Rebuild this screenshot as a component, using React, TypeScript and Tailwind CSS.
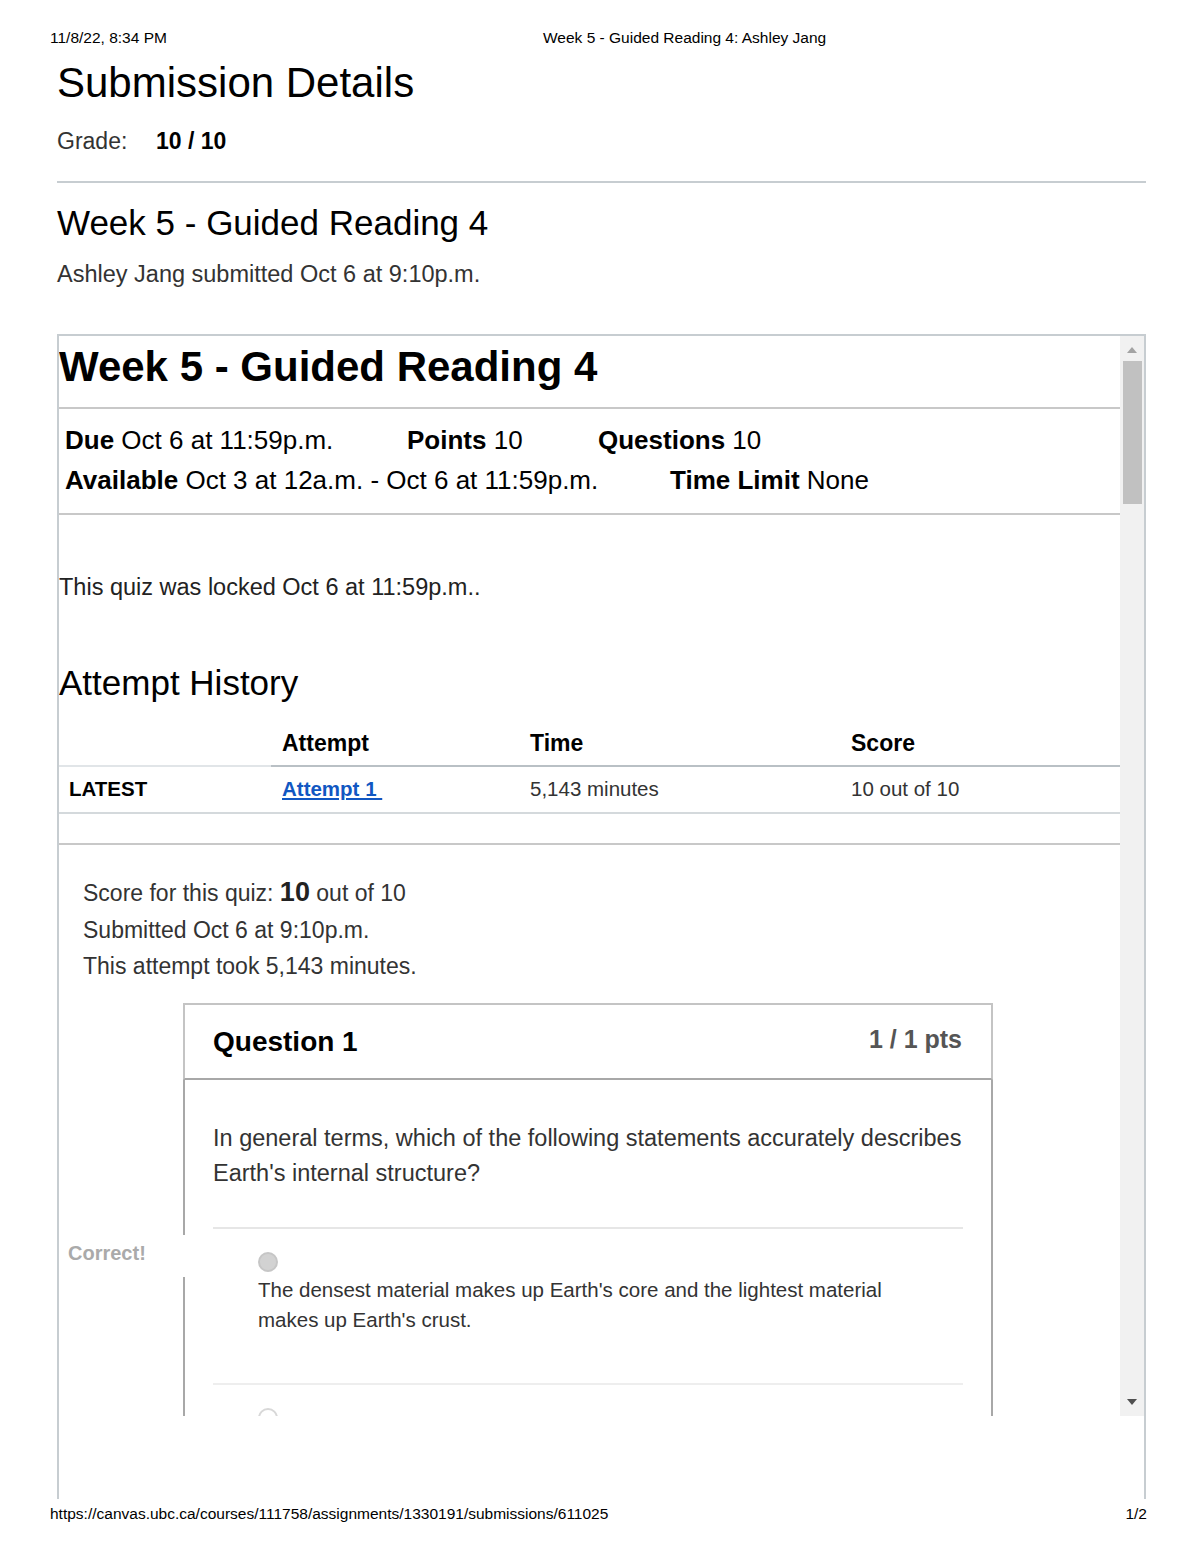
export default function App() {
  return (
    <div className="relative w-[1200px] h-[1553px] bg-white font-['Liberation_Sans',Arial,sans-serif] text-[#333]">
      {/* print header */}
      <div className="flex pt-[29px] pl-[50px] text-[15.5px] leading-[18px] text-black">
        <span className="w-[493px]">11/8/22, 8:34 PM</span>
        <span>Week 5 - Guided Reading 4: Ashley Jang</span>
      </div>

      <div className="ml-[57px] w-[1089px]">
        <h1 className="mt-[12px] text-[42px] leading-[48px] text-black">Submission Details</h1>
        <div className="mt-[21px] text-[23px] leading-[26px]">
          <span className="inline-block w-[99px]">Grade:</span>
          <span className="font-bold text-black">10 / 10</span>
        </div>
        <div className="mt-[27px] border-t-2 border-[#c7cdd1]" />
        <h2 className="mt-[20px] text-[35px] leading-[40px] text-black">Week 5 - Guided Reading 4</h2>
        <p className="mt-[17px] text-[23.5px] leading-[28px]">Ashley Jang submitted Oct 6 at 9:10p.m.</p>

        {/* embedded quiz frame */}
        <div className="mt-[46px] border-2 border-b-0 border-[#c7cdd1]">
          <div className="flex h-[1080px]">
            <div className="flex-1 overflow-hidden">
              <div className="pt-[7px] pb-[16px] border-b-2 border-[#c8c8c8]">
                <h3 className="text-[42px] leading-[48px] font-bold text-black">Week 5 - Guided Reading 4</h3>
              </div>
              <div className="pt-[11px] pb-[13px] pl-[6px] border-b-2 border-[#c8c8c8] text-[26px] leading-[40px] text-black">
                <div>
                  <span className="inline-block w-[342px]"><b>Due</b> Oct 6 at 11:59p.m.</span>
                  <span className="inline-block w-[191px]"><b>Points</b> 10</span>
                  <span><b>Questions</b> 10</span>
                </div>
                <div>
                  <span className="inline-block w-[605px]"><b>Available</b> Oct 3 at 12a.m. - Oct 6 at 11:59p.m.</span>
                  <span><b>Time Limit</b> None</span>
                </div>
              </div>

              <p className="mt-[58px] text-[23.5px] leading-[28px] text-[#222]">This quiz was locked Oct 6 at 11:59p.m..</p>
              <h4 className="mt-[62px] text-[35px] leading-[40px] text-black">Attempt History</h4>

              {/* attempt table */}
              <div className="mt-[26px] grid grid-cols-[212px_249px_320px_1fr]">
                <div className="pb-[8px] leading-[28px] border-b-2 border-[#e1e5e8]" />
                <div className="pl-[11px] pb-[8px] text-[23px] leading-[28px] font-bold text-black border-b-2 border-[#b9c0c5]">Attempt</div>
                <div className="pl-[10px] pb-[8px] text-[23px] leading-[28px] font-bold text-black border-b-2 border-[#b9c0c5]">Time</div>
                <div className="pl-[11px] pb-[8px] text-[23px] leading-[28px] font-bold text-black border-b-2 border-[#b9c0c5]">Score</div>

                <div className="pl-[10px] h-[47px] flex items-center text-[20.5px] font-bold text-black border-b-2 border-[#d4d9dc]">LATEST</div>
                <div className="pl-[11px] h-[47px] flex items-center text-[20.5px] border-b-2 border-[#d4d9dc]">
                  <a className="font-bold text-[#1157c2] underline">Attempt 1&nbsp;</a>
                </div>
                <div className="pl-[10px] h-[47px] flex items-center text-[20.5px] border-b-2 border-[#d4d9dc]">5,143 minutes</div>
                <div className="pl-[11px] h-[47px] flex items-center text-[20.5px] border-b-2 border-[#d4d9dc]">10 out of 10</div>

                <div className="col-span-4 h-[31px] border-b-2 border-[#c8c8c8]" />
              </div>

              {/* score summary */}
              <div className="mt-[28px] pl-[24px] text-[23px]">
                <p className="leading-[38px]">
                  Score for this quiz: <b className="text-[27px] text-[#222]">10</b> out of 10
                </p>
                <p className="leading-[36px]">Submitted Oct 6 at 9:10p.m.</p>
                <p className="leading-[36px]">This attempt took 5,143 minutes.</p>
              </div>

              {/* question card */}
              <div className="relative mt-[19px] ml-[124px] w-[810px]">
                <div className="flex justify-between items-start border-2 border-[#c4c4c4] border-b-[#a8a8a8] h-[77px] pt-[19px] pl-[28px] pr-[29px]">
                  <span className="text-[28px] leading-[36px] font-bold text-black">Question 1</span>
                  <span className="text-[25px] leading-[30px] font-bold text-[#555]">1 / 1 pts</span>
                </div>
                <div className="border-x-2 border-[#a8a8a8] h-[340px] px-[28px] pt-[41px]">
                  <p className="text-[23.5px] leading-[35px]">
                    In general terms, which of the following statements accurately describes Earth's internal structure?
                  </p>
                  <div className="mt-[36px] border-t-2 border-[#e6e6e6] pl-[45px] pt-[23px] pb-[48px]">
                    <div className="w-[20px] h-[20px] rounded-full bg-[#d2d2d2] border-2 border-[#c6c6c6]" />
                    <p className="mt-[3px] pr-[60px] text-[20.5px] leading-[30px]">
                      The densest material makes up Earth's core and the lightest material makes up Earth's crust.
                    </p>
                  </div>
                  <div className="border-t-2 border-[#eeeeee] pl-[45px] pt-[23px]">
                    <div className="w-[20px] h-[20px] rounded-full border-2 border-[#d8d8d8]" />
                  </div>
                </div>
                <div className="absolute top-[232px] left-[-123px] w-[130px] h-[42px] bg-white pl-[8px] text-[20px] leading-[36px] font-bold text-[#aaa]">
                  Correct!
                </div>
              </div>
            </div>

            {/* scrollbar */}
            <div className="w-[24px] bg-[#f1f1f1] flex flex-col items-center">
              <svg width="12" height="8" viewBox="0 0 12 8" className="mt-[10px]">
                <path d="M1 7 L6 1 L11 7 Z" fill="#a3a3a3" />
              </svg>
              <div className="mt-[7px] w-[19px] h-[143px] bg-[#c1c1c1]" />
              <div className="flex-1" />
              <svg width="12" height="8" viewBox="0 0 12 8" className="mb-[10px]">
                <path d="M1 1 L6 7 L11 1 Z" fill="#505050" />
              </svg>
            </div>
          </div>
          <div className="h-[83px]" />
        </div>
      </div>

      {/* print footer */}
      <div className="flex justify-between mt-[6px] pl-[50px] pr-[53px] text-[15.5px] leading-[18px] text-black">
        <span>https://canvas.ubc.ca/courses/111758/assignments/1330191/submissions/611025</span>
        <span>1/2</span>
      </div>
    </div>
  );
}
